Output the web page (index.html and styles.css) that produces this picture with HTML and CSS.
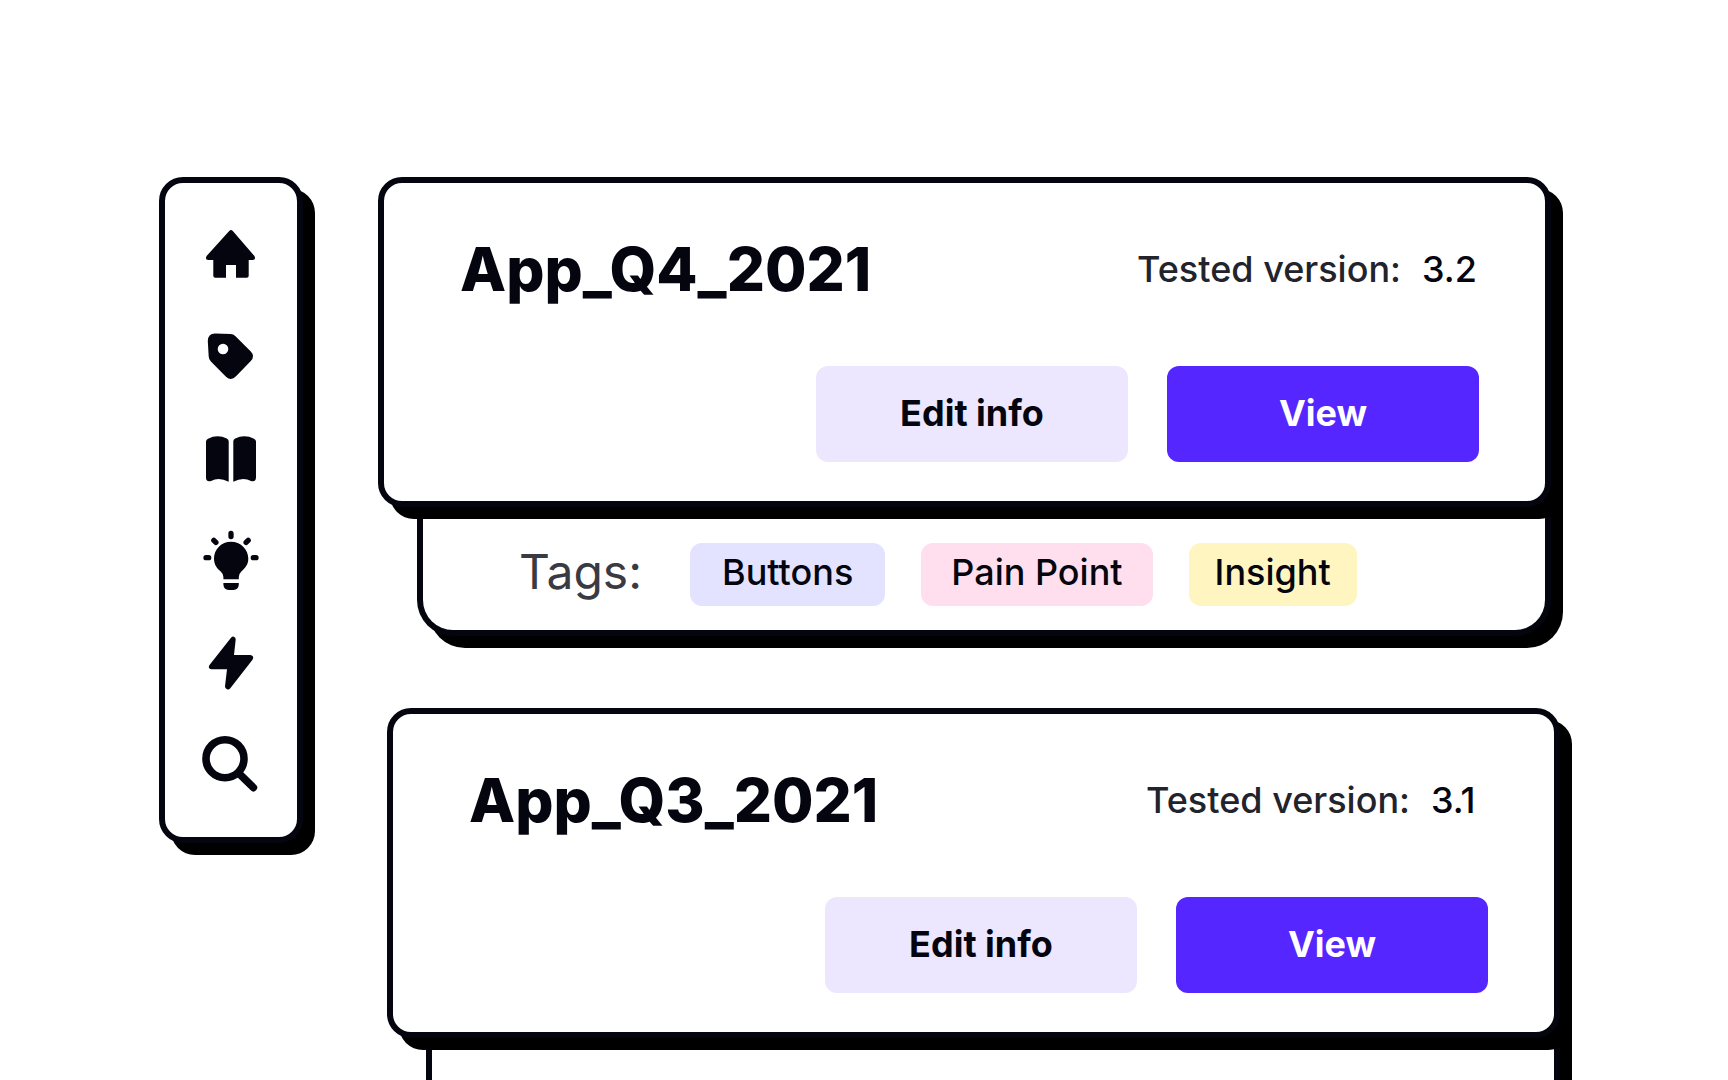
FILE: index.html
```html
<!DOCTYPE html>
<html lang="en">
<head>
    <meta charset="UTF-8">
    <meta name="viewport" content="width=device-width, initial-scale=1.0">
    <title>Projects</title>
    <link rel="stylesheet" href="styles.css">
</head>
<body>
    <div class="page">
        <nav class="sidebar">
            <a href="#home" aria-label="Home">
                <svg class="icon" viewBox="0 0 72 72">
                    <path d="M34.2 11.9Q36 10.2 37.8 11.9L59.4 37Q61.4 40.7 57.6 41H53.7V56.7Q53.7 58.7 51.7 58.7H41V46H31V58.7H20.3Q18.3 58.7 18.3 56.7V41H13.4Q9.6 40.7 11.6 37Z"/>
                </svg>
            </a>
            <a href="#tags" aria-label="Tags">
                <svg class="icon" viewBox="0 0 72 72">
                    <path fill-rule="evenodd" d="M20 12.5L35.5 13.1Q38.4 13.2 40.5 15.2L55.8 30.6Q60.3 35.3 55.8 40L41 55.3Q36 60.3 31 55.7L15.9 40.6Q13.8 38.5 13.7 35.6L12.8 20Q12.9 12.7 20 12.5ZM28 22.7A5.3 5.3 0 1 0 28 33.3A5.3 5.3 0 1 0 28 22.7Z"/>
                </svg>
            </a>
            <a href="#library" aria-label="Library">
                <svg class="icon" viewBox="0 0 72 72">
                    <path d="M11 18.6Q11 16.6 13 15.7Q22.3 11.2 31.8 15.4Q33.7 16.3 33.7 18.3V58.8Q24 53.5 16 58Q11 59.3 11 54.5Z"/>
                    <path d="M61 18.6Q61 16.6 59 15.7Q49.7 11.2 40.2 15.4Q38.3 16.3 38.3 18.3V58.8Q48 53.5 56 58Q61 59.3 61 54.5Z"/>
                </svg>
            </a>
            <a href="#insights" aria-label="Insights">
                <svg class="icon" viewBox="0 0 72 72">
                    <path d="M36 16.7C26.5 16.7 19 24.2 19 33.5C19 40.5 22.6 43.6 25.5 46.3Q28.4 49 28.4 52V54.3H43.8V52Q43.8 49 46.5 46.3C49.6 43.3 53.3 40.3 53.3 33.5C53.3 24.2 45.5 16.7 36 16.7Z"/>
                    <path d="M28.4 58H43.8V59.5Q43.5 64.9 38.5 64.9H33.7Q28.7 64.9 28.4 59.5Z"/>
                    <path class="rays" d="M36 8.4V11.6M11 32.7H13.7M58.3 32.7H61M18.8 15.3L20.9 17.4M53.2 15.3L51.1 17.4"/>
                </svg>
            </a>
            <a href="#actions" aria-label="Quick actions">
                <svg class="icon" viewBox="0 0 72 72">
                    <path d="M36 10.7Q37.5 9 39.3 9.9Q40.8 10.6 40.7 12.5L39 28H55.5Q59.7 29 57.5 32.7L35.3 61.2Q33.8 63 32 62.2Q29.8 61.5 30 59.3L32 42.2H16.3Q12.5 41.5 14.5 38Z"/>
                </svg>
            </a>
            <a href="#search" aria-label="Search">
                <svg class="icon" viewBox="0 0 72 72">
                    <path class="lens" d="M30 10.7A19 19 0 1 0 30 48.7A19 19 0 1 0 30 10.7ZM44 44.5L58.4 58.6"/>
                </svg>
            </a>
        </nav>

        <main class="projects">
            <section class="project">
                <div class="card">
                    <div class="card-header">
                        <h2 class="card-title">App_Q4_2021</h2>
                        <p class="version">Tested version: <span class="version-number">3.2</span></p>
                    </div>
                    <div class="card-actions">
                        <button type="button" class="button button-edit">Edit info</button>
                        <button type="button" class="button button-view">View</button>
                    </div>
                </div>
                <div class="tag-panel">
                    <span class="tag-label">Tags:</span>
                    <span class="tag tag-buttons">Buttons</span>
                    <span class="tag tag-pain">Pain Point</span>
                    <span class="tag tag-insight">Insight</span>
                </div>
            </section>

            <section class="project project-shifted">
                <div class="card">
                    <div class="card-header">
                        <h2 class="card-title">App_Q3_2021</h2>
                        <p class="version">Tested version: <span class="version-number">3.1</span></p>
                    </div>
                    <div class="card-actions">
                        <button type="button" class="button button-edit">Edit info</button>
                        <button type="button" class="button button-view">View</button>
                    </div>
                </div>
                <div class="tag-panel"></div>
            </section>
        </main>
    </div>
</body>
</html>
```
FILE: styles.css
```css
* {
    margin: 0;
    padding: 0;
    box-sizing: border-box;
}

body {
    font-family: Inter, sans-serif;
    background: #ffffff;
    color: #05050f;
}

.page {
    display: flex;
    align-items: flex-start;
    gap: 75px;
    padding: 177px 168px 0 159px;
}

/* Sidebar */
.sidebar {
    display: flex;
    flex-direction: column;
    gap: 30px;
    padding: 36px 30px;
    background: #ffffff;
    border: 6px solid #05050f;
    border-radius: 24px;
    box-shadow: 12px 12px 0 #000000;
}

.sidebar a {
    color: #05050f;
}

.icon {
    display: block;
    width: 72px;
    height: 72px;
    fill: currentColor;
}

.rays,
.lens {
    fill: none;
    stroke: currentColor;
    stroke-linecap: round;
}

.rays {
    stroke-width: 5.3px;
}

.lens {
    stroke-width: 7.6px;
}

/* Project cards */
.projects {
    flex: 1;
    display: flex;
    flex-direction: column;
    gap: 72px;
}

.project {
    margin-right: 9px;
}

.project-shifted {
    margin-left: 9px;
    margin-right: 0;
}

.card {
    position: relative;
    z-index: 1;
    padding: 50px 66px 39px 76px;
    background: #ffffff;
    border: 6px solid #05050f;
    border-radius: 24px;
    box-shadow: 12px 12px 0 #000000;
}

.card-header {
    display: flex;
    align-items: center;
    justify-content: space-between;
    margin-bottom: 61px;
}

.card-title {
    font-size: 60px;
    line-height: 72px;
    font-weight: 800;
}

.version {
    display: flex;
    gap: 21px;
    font-size: 36px;
    line-height: 48px;
    font-weight: 500;
    color: #23232c;
}

.version-number {
    min-width: 57px;
    color: #05050f;
}

.card-actions {
    display: flex;
    justify-content: flex-end;
    gap: 39px;
}

.button {
    width: 312px;
    height: 96px;
    padding-bottom: 2px;
    border: none;
    border-radius: 12px;
    font-family: inherit;
    font-size: 36px;
    font-weight: 700;
    cursor: pointer;
}

.button-edit {
    background: #ece7ff;
    color: #05050f;
}

.button-view {
    background: #5526ff;
    color: #ffffff;
}

/* Tags tray, tucked behind the card */
.tag-panel {
    display: flex;
    align-items: center;
    gap: 36px;
    min-height: 165px;
    margin-top: -36px;
    margin-left: 39px;
    padding: 72px 96px 24px;
    background: #ffffff;
    border: 6px solid #05050f;
    border-top: none;
    border-radius: 0 0 36px 36px;
    box-shadow: 12px 12px 0 #000000;
}

.tag-label {
    margin-right: 12px;
    padding-bottom: 6px;
    font-size: 48px;
    line-height: 57px;
    color: #3a3a43;
}

.tag {
    padding: 5px 30px 10px;
    border-radius: 12px;
    font-size: 36px;
    line-height: 48px;
    font-weight: 500;
}

.tag-buttons {
    padding-left: 32px;
    padding-right: 32px;
    background: #e3e2ff;
}

.tag-pain {
    background: #ffdfee;
}

.tag-insight {
    padding-left: 26px;
    padding-right: 26px;
    background: #fff5c0;
}
```
